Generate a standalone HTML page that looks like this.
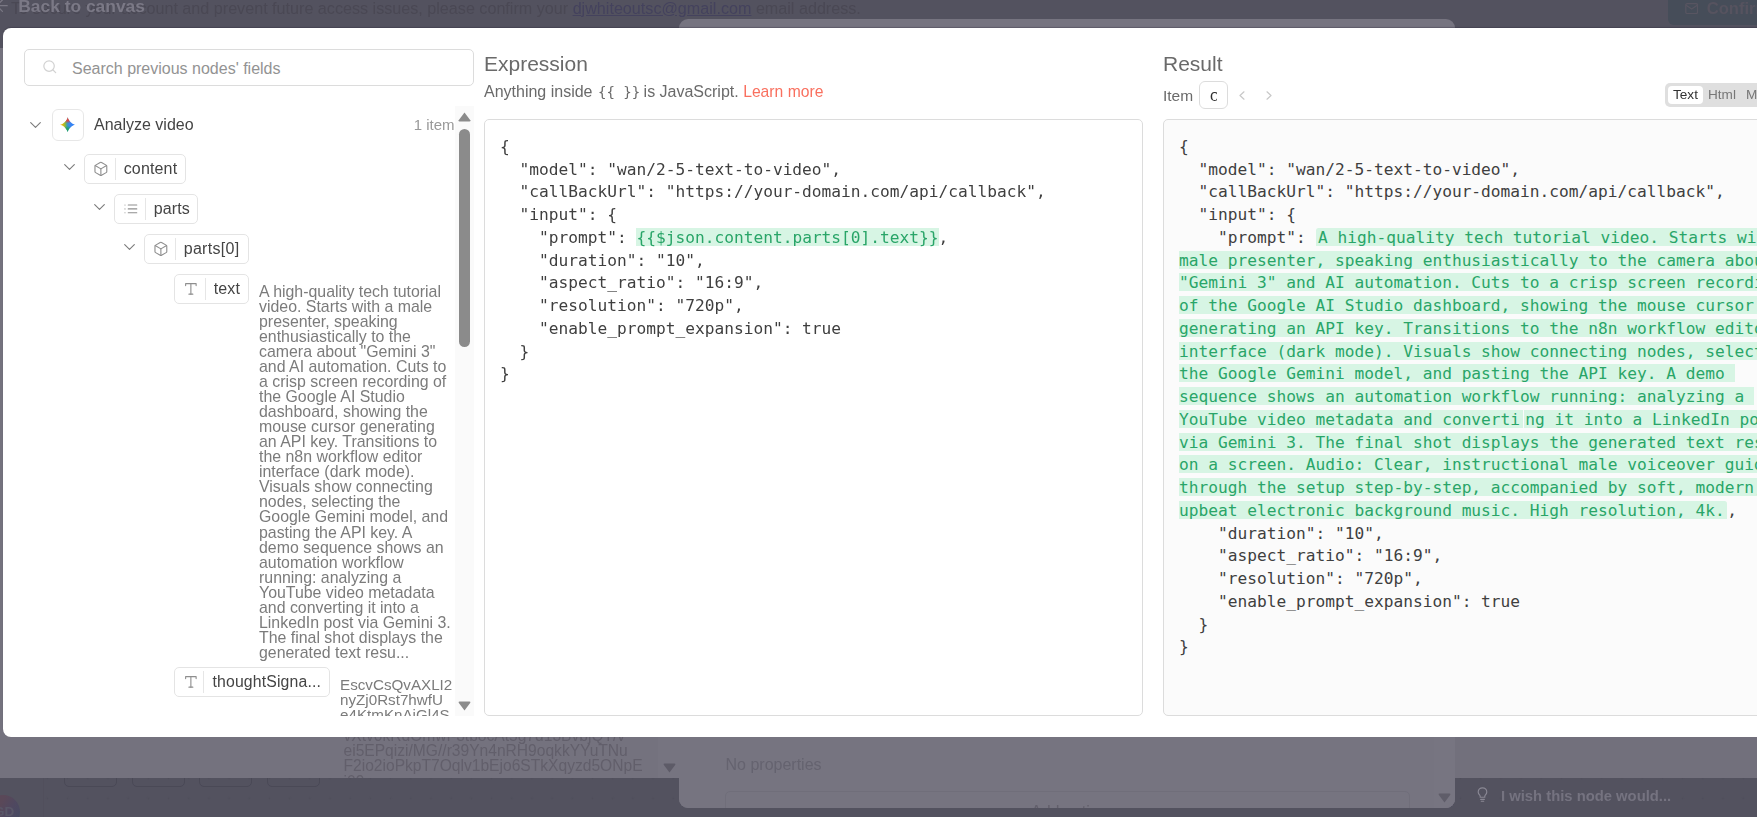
<!DOCTYPE html>
<html lang="en">
<head>
<meta charset="utf-8">
<title>n8n expression editor</title>
<style>
*{box-sizing:border-box;margin:0;padding:0}
html,body{width:1757px;height:817px;overflow:hidden}
body{background:#53525f;font-family:"Liberation Sans",sans-serif;position:relative;color:#444}
.abs{position:absolute}
.nw{white-space:nowrap}
i{font-style:normal}
/* ---------- background ghost layer ---------- */
#bg{position:absolute;left:0;top:0;width:1757px;height:817px;overflow:hidden}
#bg .dots{position:absolute;left:44px;top:778px;width:1713px;height:39px;background-image:radial-gradient(circle,#4e4d5a 0.6px,rgba(78,77,90,0) 1.1px);background-size:20.2px 20.2px;background-position:-6.7px 10.2px}
#bg .band{position:absolute;left:0;top:48px;width:1757px;height:730px;background:linear-gradient(90deg,#74727e 0,#74727e 679px,#72707c 679px)}
#bg .mid{position:absolute;left:679px;top:19px;width:776px;height:789px;background:#767480;border-radius:9px}
#bg .banner{position:absolute;left:11px;top:-2.5px;font-size:16.15px;line-height:20px;color:#4a4854;white-space:nowrap}
#bg .banner u{color:#44425d}
#bg .back{position:absolute;left:18.3px;top:-4px;font-size:17.4px;line-height:20px;font-weight:bold;color:#7b7986;white-space:nowrap}
#bg .confirm{position:absolute;left:1668px;top:-12px;width:120px;height:37px;border-radius:6px;background:#464d59}
#bg .confirm span{position:absolute;left:38.7px;top:10.5px;font-size:16.6px;line-height:20px;font-weight:bold;color:#56535f}
#bg .confirm svg{position:absolute;left:16.7px;top:15.2px}
#bg .ghost{position:absolute;left:343.5px;top:727.6px;font-size:15.6px;line-height:15.4px;color:#625f6b;white-space:nowrap;height:50.4px;overflow:hidden}
#bg .sbl{position:absolute;left:658px;top:737px;width:21px;height:41px;background:#767480}
#bg .sbr{position:absolute;left:1434px;top:737px;width:21px;height:71px;background:#777581;border-bottom-right-radius:9px}
#bg .noprop{position:absolute;left:725.5px;top:755.2px;font-size:16px;line-height:20px;color:#65636f;white-space:nowrap}
#bg .addopt{position:absolute;left:725px;top:791px;width:685px;height:40px;border:1px solid #706e7a;border-radius:5px}
#bg .addopt span{position:absolute;left:305px;top:10px;font-size:16px;line-height:20px;color:#625f6b;white-space:nowrap}
#bg .midclip{position:absolute;left:679px;top:737px;width:776px;height:71px;overflow:hidden;border-radius:0 0 9px 9px}
#bg .wish{position:absolute;left:1501px;top:786px;font-size:14.8px;line-height:20px;font-weight:bold;color:#757380;white-space:nowrap}
#bg .zb{position:absolute;top:750px;width:53px;height:36.5px;border:1px solid #4a4956;border-radius:5px}
#bg .side{position:absolute;left:43px;top:778px;width:1px;height:40px;background:#514f5c}
#bg .avatar{position:absolute;left:-14px;top:794.5px;width:34px;height:34px;border-radius:50%;background:linear-gradient(125deg,#5a4858 35%,#4f4860 60%,#474a62 85%);overflow:hidden}
#bg .avatar span{position:absolute;left:8px;top:9.5px;font-size:13.5px;font-weight:bold;color:#595768}
/* ---------- modal ---------- */
#modal{position:absolute;left:3px;top:28px;width:1800px;height:709px;background:#fff;border-radius:8px;box-shadow:0 -1px 1px rgba(40,38,52,.3)}
/* search */
#search{position:absolute;left:24px;top:49px;width:450px;height:37px;border:1px solid #dcdcdc;border-radius:5px;background:#fff}
#search svg{position:absolute;left:18px;top:10px}
#search span{position:absolute;left:47px;top:9.5px;font-size:16px;line-height:18px;color:#939393;white-space:nowrap}
/* tree */
#tree{position:absolute;left:24px;top:106px;width:450px;height:610px;overflow:hidden}
.chev{position:absolute;width:11px;height:6px}
.pill{position:absolute;height:30px;border:1px solid #e4e4e4;border-radius:5px;background:#fff}
.pill .ic{position:absolute;left:8.1px;top:6.2px;width:15.75px;height:15.75px}
.pill .dv{position:absolute;left:30px;top:2.6px;width:1px;height:22px;background:#e6e6e6}
.pill .lb{position:absolute;left:38.7px;top:4px;font-size:16px;line-height:20px;letter-spacing:0.15px;color:#444;white-space:nowrap}
.val{position:absolute;font-size:15.9px;line-height:15.07px;color:#7b7b7b;white-space:nowrap}
#nodebox{position:absolute;left:28px;top:3px;width:32px;height:32px;border:1px solid #e7e7e7;border-radius:6px;background:#fff}
#sbtrack{position:absolute;left:431px;top:0;width:19px;height:610px;background:#fafafa}
#sbthumb{position:absolute;left:435px;top:23px;width:11px;height:218px;border-radius:6px;background:#8b8b8b}
/* middle */
.h1{position:absolute;font-size:21px;line-height:24px;color:#6a6a6a;white-space:nowrap}
.sub{position:absolute;font-size:16px;line-height:20px;color:#6a6a6a;white-space:nowrap}
.mono{font-family:"DejaVu Sans Mono","Liberation Mono",monospace}
.ed{position:absolute;top:119px;height:597px;border:1px solid #dcdcdc;border-radius:5px;overflow:hidden}
.code{position:absolute;left:15px;top:15.9px;font-family:"DejaVu Sans Mono","Liberation Mono",monospace;font-size:16.2px;line-height:22.75px;color:#3f3f3f;white-space:pre}
.hl{background:linear-gradient(#d7f5e4,#d7f5e4) no-repeat 0 0/100% 18px;color:#29a568}
/* right */
#itembox{position:absolute;left:1199px;top:81px;width:29px;height:28px;border:1px solid #dcdcdc;border-radius:6px;background:#fff;overflow:hidden}
#itembox span{position:absolute;left:10.2px;top:7.2px;width:6.9px;overflow:hidden;font-size:12px;line-height:16px;color:#2d2d2d;white-space:nowrap}
#itembox span b{display:inline-block;font-weight:normal;transform:scaleX(1.4);transform-origin:0 50%}
#seg{position:absolute;left:1665px;top:83px;width:140px;height:24px;border-radius:5px;background:#dfdfdf}
#seg .on{position:absolute;left:3px;top:3px;width:35px;height:18px;border-radius:4px;background:#fff}
#seg span{position:absolute;top:4px;font-size:13.6px;line-height:16px;white-space:nowrap}
/* force grayscale text antialiasing (composited, non-opaque layers) */
#tree,.ed.gs,.h1,.sub,#seg,#itembox,#bg{will-change:transform}
</style>
</head>
<body>
<div id="bg">
  <div class="dots"></div>
  <div class="zb" style="left:64px"></div><div class="zb" style="left:131.5px"></div><div class="zb" style="left:199px"></div><div class="zb" style="left:266.5px"></div>
  <div class="side"></div>
  <div class="avatar"><span>GD</span></div>
  <div class="band"></div>
  <div class="mid"></div>
  <div class="banner">To secure your account and prevent future access issues, please confirm your <u>djwhiteoutsc@gmail.com</u> email address.</div>
  <svg class="abs" style="left:-9px;top:-2px" width="17" height="16" viewBox="0 0 17 16" fill="none" stroke="#7a7884" stroke-width="1.3" stroke-linecap="round" stroke-linejoin="round"><path d="M16.2 7.65 H5.7 M11.4 1.95 L5.7 7.65 L11.4 13.35"/></svg>
  <div class="back">Back to canvas</div>
  <div class="confirm"><svg width="13.3" height="11.2" viewBox="0 0 15 13" fill="none" stroke="#585561" stroke-width="1.4" stroke-linejoin="round"><rect x="0.7" y="0.7" width="13.6" height="11.6" rx="1.6"/><path d="M1 2.6 L7.5 7 L14 2.6"/></svg><span>Confirm</span></div>
  <div class="ghost">vXtv0kRdOmwf-3tb8cAt5g7d13BvbjQT/v<br>ei5EPqizi/MG//r39Yn4nRH9oqkkYYuTNu<br>F2io2ioPkpT7Oqlv1bEjo6STkXqyzd5ONpE<br>i09</div>
  <div class="sbl"></div>
  <svg class="abs" style="left:663px;top:763px" width="13" height="10" viewBox="0 0 13 10"><path d="M6.5 9.4 L12.3 1.8 Q12.6 0.6 11.4 0.6 L1.6 0.6 Q0.4 0.6 0.7 1.8 Z" fill="#5d5b67"/></svg>
  <div class="mid" style="top:737px;height:71px;border-radius:0 0 9px 9px"></div>
  <div class="midclip"><div class="addopt" style="left:46px;top:54px"><span>Add option</span></div></div>
  <div class="sbr"></div>
  <svg class="abs" style="left:1438px;top:792.5px" width="13" height="10" viewBox="0 0 13 10"><path d="M6.5 9.4 L12.3 1.8 Q12.6 0.6 11.4 0.6 L1.6 0.6 Q0.4 0.6 0.7 1.8 Z" fill="#5f5d69"/></svg>
  <div class="noprop">No properties</div>
  <svg class="abs" style="left:1476px;top:786.5px" width="13" height="15" viewBox="0 0 13 15" fill="none" stroke="#8a8894" stroke-width="1.15" stroke-linecap="round" stroke-linejoin="round"><path d="M4.2 10.2 V9.2 C4.2 8.2 2.2 7.2 2.2 4.9 C2.2 2.5 4.1 0.8 6.5 0.8 C8.9 0.8 10.8 2.5 10.8 4.9 C10.8 7.2 8.8 8.2 8.8 9.2 V10.2 Z M4.6 12.3 H8.4 M5.3 14.2 H7.7"/></svg>
  <div class="wish">I wish this node would...</div>
</div>
<div id="modal"></div>
<div id="search">
  <svg width="14" height="14" viewBox="0 0 15 15" fill="none" stroke="#d2d2d2" stroke-width="1.3" stroke-linecap="round"><circle cx="6.5" cy="6.5" r="5.6"/><path d="M10.7 10.7 L13.6 13.6"/></svg>
  <span>Search previous nodes' fields</span>
</div>
<div id="tree">
  <svg class="chev" style="left:6px;top:16px" viewBox="0 0 11 6" fill="none" stroke="#7c7c7c" stroke-width="1.15" stroke-linecap="round" stroke-linejoin="round"><path d="M0.7 0.7 L5.5 5.3 L10.3 0.7"/></svg>
  <div id="nodebox">
    <svg class="abs" style="left:6.9px;top:6.9px" width="15.4" height="15.4" viewBox="0 0 16 16">
      <defs>
        <clipPath id="gst"><path d="M8 0 C8 3 13 8 16 8 C13 8 8 13 8 16 C8 13 3 8 0 8 C3 8 8 3 8 0 Z"/></clipPath>
        <linearGradient id="gb" x1="0" y1="0" x2="16" y2="0" gradientUnits="userSpaceOnUse"><stop offset="0" stop-color="#f9ab00"/><stop offset="0.14" stop-color="#f2b705"/><stop offset="0.33" stop-color="#8fbb3a"/><stop offset="0.47" stop-color="#3f9bb8"/><stop offset="0.6" stop-color="#3b86f0"/><stop offset="1" stop-color="#2f7ff7"/></linearGradient>
        <radialGradient id="gr" cx="8" cy="0.5" r="6.2" gradientUnits="userSpaceOnUse"><stop offset="0" stop-color="#ea4335"/><stop offset="0.5" stop-color="#ea4335" stop-opacity="0.95"/><stop offset="1" stop-color="#ea4335" stop-opacity="0"/></radialGradient>
        <radialGradient id="gn" cx="8" cy="15.5" r="6.4" gradientUnits="userSpaceOnUse"><stop offset="0" stop-color="#1ea362"/><stop offset="0.5" stop-color="#1ea362" stop-opacity="0.95"/><stop offset="1" stop-color="#1ea362" stop-opacity="0"/></radialGradient>
      </defs>
      <g clip-path="url(#gst)"><rect width="16" height="16" fill="url(#gb)"/><rect width="16" height="16" fill="url(#gn)"/><rect width="16" height="16" fill="url(#gr)"/></g>
    </svg>
  </div>
  <div class="abs nw" style="left:70px;top:9px;font-size:16px;line-height:20px;color:#444">Analyze video</div>
  <div class="abs nw" style="left:380px;top:9px;width:50.5px;text-align:right;font-size:15px;line-height:20px;color:#999">1 item</div>
  <svg class="chev" style="left:40px;top:58px" viewBox="0 0 11 6" fill="none" stroke="#7c7c7c" stroke-width="1.15" stroke-linecap="round" stroke-linejoin="round"><path d="M0.7 0.7 L5.5 5.3 L10.3 0.7"/></svg>
  <div class="pill" style="left:60px;top:48px;width:102px"><svg class="ic" viewBox="0 0 24 24" fill="none" stroke="#8e8e8e" stroke-width="1.7" stroke-linecap="round" stroke-linejoin="round"><path d="M21 8a2 2 0 0 0-1-1.73l-7-4a2 2 0 0 0-2 0l-7 4A2 2 0 0 0 3 8v8a2 2 0 0 0 1 1.73l7 4a2 2 0 0 0 2 0l7-4A2 2 0 0 0 21 16Z"/><path d="m3.3 7 8.7 5 8.7-5"/><path d="M12 22V12"/></svg><i class="dv"></i><span class="lb">content</span></div>
  <svg class="chev" style="left:70px;top:98px" viewBox="0 0 11 6" fill="none" stroke="#7c7c7c" stroke-width="1.15" stroke-linecap="round" stroke-linejoin="round"><path d="M0.7 0.7 L5.5 5.3 L10.3 0.7"/></svg>
  <div class="pill" style="left:90px;top:88px;width:84px"><svg class="ic" viewBox="0 0 24 24" fill="none" stroke="#8e8e8e" stroke-width="1.7" stroke-linecap="round" stroke-linejoin="round"><path d="M3 12h.01"/><path d="M3 18h.01"/><path d="M3 6h.01"/><path d="M8 12h13"/><path d="M8 18h13"/><path d="M8 6h13"/></svg><i class="dv"></i><span class="lb">parts</span></div>
  <svg class="chev" style="left:100px;top:138px" viewBox="0 0 11 6" fill="none" stroke="#7c7c7c" stroke-width="1.15" stroke-linecap="round" stroke-linejoin="round"><path d="M0.7 0.7 L5.5 5.3 L10.3 0.7"/></svg>
  <div class="pill" style="left:120px;top:128px;width:105px"><svg class="ic" viewBox="0 0 24 24" fill="none" stroke="#8e8e8e" stroke-width="1.7" stroke-linecap="round" stroke-linejoin="round"><path d="M21 8a2 2 0 0 0-1-1.73l-7-4a2 2 0 0 0-2 0l-7 4A2 2 0 0 0 3 8v8a2 2 0 0 0 1 1.73l7 4a2 2 0 0 0 2 0l7-4A2 2 0 0 0 21 16Z"/><path d="m3.3 7 8.7 5 8.7-5"/><path d="M12 22V12"/></svg><i class="dv"></i><span class="lb" style="letter-spacing:0.3px">parts[0]</span></div>
  <div class="pill" style="left:150px;top:168px;width:75px"><svg class="ic" viewBox="0 0 24 24" fill="none" stroke="#8e8e8e" stroke-width="1.7" stroke-linecap="round" stroke-linejoin="round"><path d="M4 7V4h16v3"/><path d="M9 20h6"/><path d="M12 4v16"/></svg><i class="dv"></i><span class="lb">text</span></div>
  <div class="val" style="left:235px;top:177.5px">A high-quality tech tutorial<br>video. Starts with a male<br>presenter, speaking<br>enthusiastically to the<br>camera about &quot;Gemini 3&quot;<br>and AI automation. Cuts to<br>a crisp screen recording of<br>the Google AI Studio<br>dashboard, showing the<br>mouse cursor generating<br>an API key. Transitions to<br>the n8n workflow editor<br>interface (dark mode).<br>Visuals show connecting<br>nodes, selecting the<br>Google Gemini model, and<br>pasting the API key. A<br>demo sequence shows an<br>automation workflow<br>running: analyzing a<br>YouTube video metadata<br>and converting it into a<br>LinkedIn post via Gemini 3.<br>The final shot displays the<br>generated text resu...</div>
  <div class="pill" style="left:150px;top:561px;width:156px"><svg class="ic" viewBox="0 0 24 24" fill="none" stroke="#8e8e8e" stroke-width="1.7" stroke-linecap="round" stroke-linejoin="round"><path d="M4 7V4h16v3"/><path d="M9 20h6"/><path d="M12 4v16"/></svg><i class="dv" style="left:28.4px"></i><span class="lb" style="left:37.5px;font-size:15.8px">thoughtSigna...</span></div>
  <div class="val" style="left:316px;top:570.6px;font-size:15.2px">EscvCsQvAXLI2<br>nyZj0Rst7hwfU<br>e4KtmKnAjGl4S<br>x9dLw2PqRt7Yb</div>
  <div id="sbtrack"></div>
  <svg class="abs" style="left:434px;top:6px" width="13" height="10" viewBox="0 0 13 10"><path d="M6.5 0.6 L12.3 8.2 Q12.6 9.4 11.4 9.4 L1.6 9.4 Q0.4 9.4 0.7 8.2 Z" fill="#8b8b8b"/></svg>
  <div id="sbthumb"></div>
  <svg class="abs" style="left:434px;top:595px" width="13" height="10" viewBox="0 0 13 10"><path d="M6.5 9.4 L12.3 1.8 Q12.6 0.6 11.4 0.6 L1.6 0.6 Q0.4 0.6 0.7 1.8 Z" fill="#8b8b8b"/></svg>
</div>
<div class="h1" style="left:484px;top:52px">Expression</div>
<div class="sub" style="left:484px;top:81.5px">Anything inside <span class="mono" style="font-size:14px;position:relative;top:-0.5px;margin:0 -1px 0 1px">{{&nbsp;}}</span> is JavaScript. <span style="color:#f9705f;font-size:15.7px">Learn more</span></div>
<div class="ed gs" style="left:484px;width:659px;background:#fff">
<pre class="code">{
  "model": "wan/2-5-text-to-video",
  "callBackUrl": "https://your-domain.com/api/callback",
  "input": {
    "prompt": <span class="hl">{{$json.content.parts[0].text}}</span>,
    "duration": "10",
    "aspect_ratio": "16:9",
    "resolution": "720p",
    "enable_prompt_expansion": true
  }
}</pre>
</div>
<div class="h1" style="left:1163px;top:52px">Result</div>
<div class="sub" style="left:1163px;top:86px;font-size:15.5px">Item</div>
<div id="itembox"><span><b>0</b></span></div>
<svg class="abs" style="left:1239px;top:91px" width="6" height="9" viewBox="0 0 6 9" fill="none" stroke="#c8c8c8" stroke-width="1.2" stroke-linecap="round" stroke-linejoin="round"><path d="M5 0.8 L1 4.5 L5 8.2"/></svg>
<svg class="abs" style="left:1266px;top:91px" width="6" height="9" viewBox="0 0 6 9" fill="none" stroke="#c8c8c8" stroke-width="1.2" stroke-linecap="round" stroke-linejoin="round"><path d="M1 0.8 L5 4.5 L1 8.2"/></svg>
<div id="seg"><i class="on"></i><span style="left:8px;color:#333">Text</span><span style="left:43px;color:#777">Html</span><span style="left:81px;color:#777">Markdown</span></div>
<div class="ed" style="left:1163px;width:700px;background:#fbfbfb">
<pre class="code">{
  "model": "wan/2-5-text-to-video",
  "callBackUrl": "https://your-domain.com/api/callback",
  "input": {
    "prompt": <span class="hl" style="margin-left:1px;padding-left:1.5px;border-radius:2.5px 0 0 0">A high-quality tech tutorial video. Starts with a </span>
<span class="hl">male presenter, speaking enthusiastically to the camera about </span>
<span class="hl">"Gemini 3" and AI automation. Cuts to a crisp screen recording </span>
<span class="hl">of the Google AI Studio dashboard, showing the mouse cursor </span>
<span class="hl">generating an API key. Transitions to the n8n workflow editor </span>
<span class="hl">interface (dark mode). Visuals show connecting nodes, selecting </span>
<span class="hl">the Google Gemini model, and pasting the API key. A demo </span>
<span class="hl">sequence shows an automation workflow running: analyzing a </span>
<span class="hl" style="padding-right:2.6px">YouTube video metadata and converti</span><span class="hl" style="margin-left:0.8px;padding-left:1.7px">ng it into a LinkedIn post </span>
<span class="hl">via Gemini 3. The final shot displays the generated text result </span>
<span class="hl">on a screen. Audio: Clear, instructional male voiceover guiding you </span>
<span class="hl">through the setup step-by-step, accompanied by soft, modern, </span>
<span class="hl" style="padding-right:2.6px;border-radius:0 2.5px 0 0">upbeat electronic background music. High resolution, 4k.</span>,
    "duration": "10",
    "aspect_ratio": "16:9",
    "resolution": "720p",
    "enable_prompt_expansion": true
  }
}</pre>
</div>
</body>
</html>
